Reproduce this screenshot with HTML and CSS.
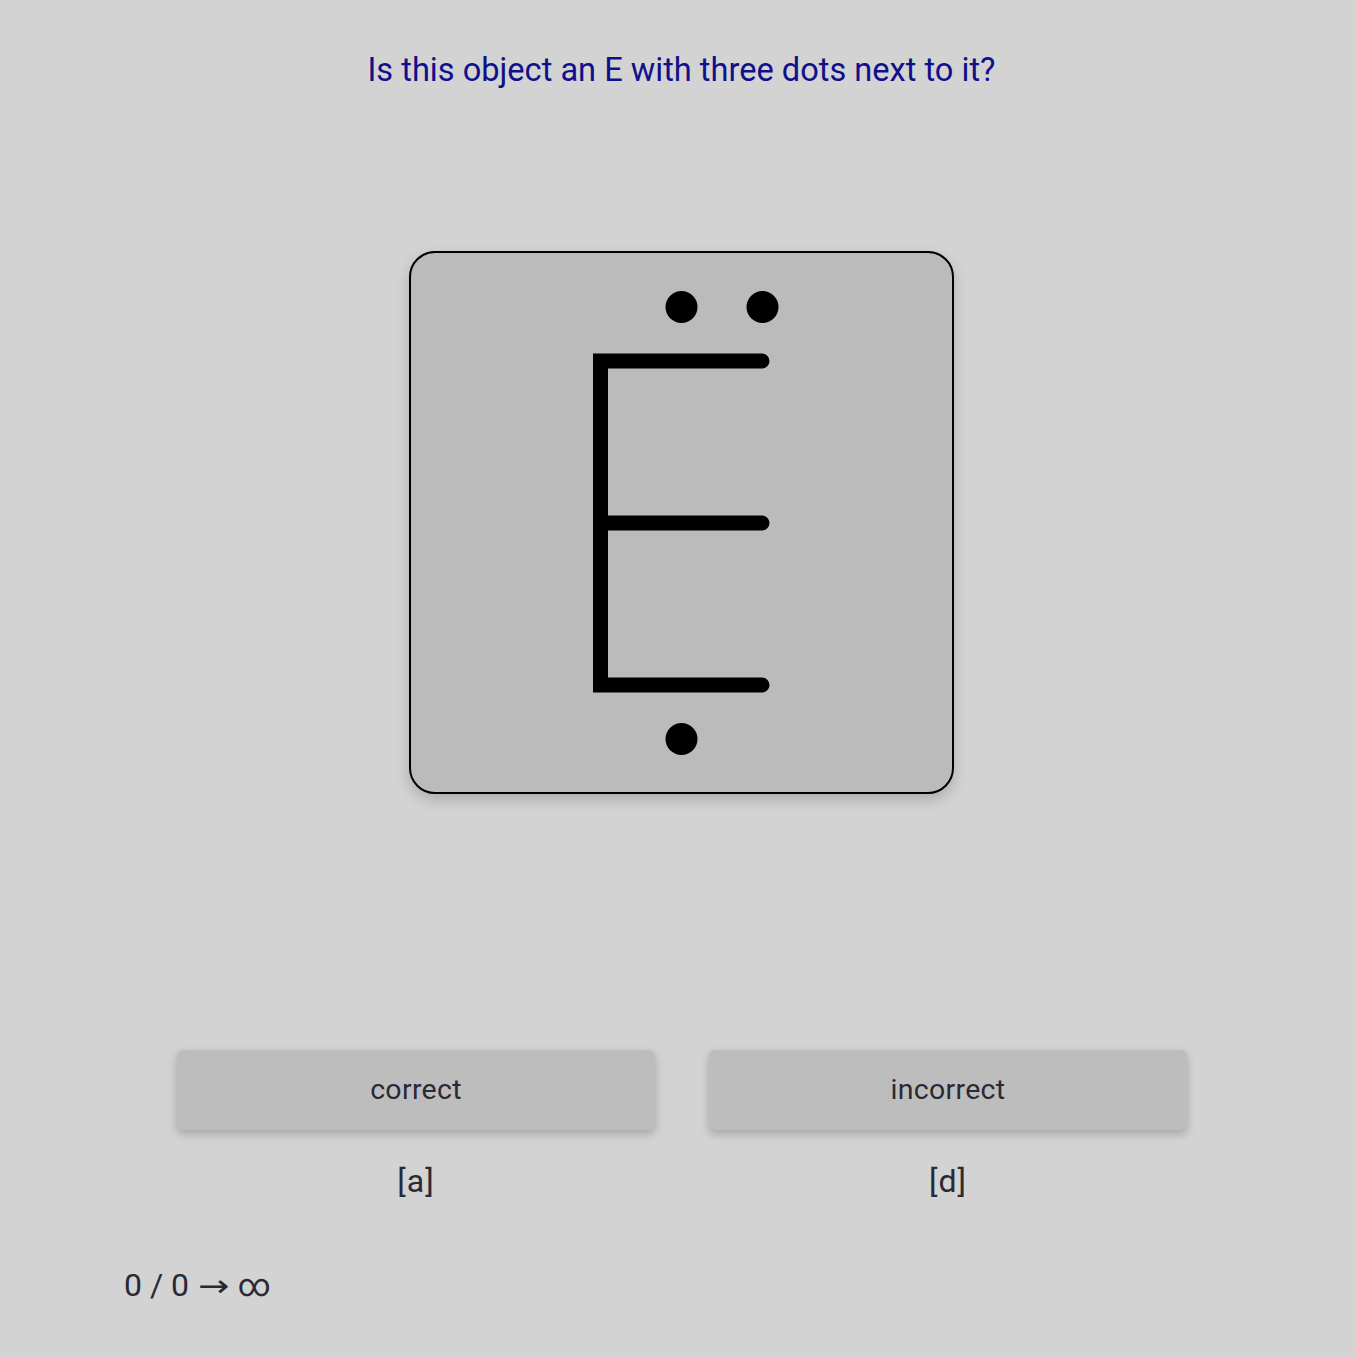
FILE: index.html
```html
<!DOCTYPE html>
<html>
<head>
<meta charset="utf-8">
<link rel="stylesheet" href="styles.css">
</head>
<body>
<div class="page">
  <h1 class="question">Is this object an E with three dots next to it?</h1>
  <div class="stage">
    <div class="card">
      <svg class="glyph" width="545" height="543" viewBox="0 0 545 543">
        <circle cx="272.5" cy="56" r="16" fill="#000"/>
        <circle cx="353.5" cy="56" r="16" fill="#000"/>
        <circle cx="272.5" cy="488" r="16" fill="#000"/>
        <path d="M353 110 H191.5 V434 H353 M191.5 272 H353" fill="none" stroke="#000" stroke-width="15" stroke-linecap="round" stroke-linejoin="miter"/>
      </svg>
    </div>
  </div>
  <div class="choices">
    <div class="choice">
      <button class="btn">correct</button>
      <div class="key">[a]</div>
    </div>
    <div class="choice">
      <button class="btn">incorrect</button>
      <div class="key">[d]</div>
    </div>
  </div>
  <div class="score">0 / 0 <span class="arrow">→</span> ∞</div>
</div>
</body>
</html>
```
FILE: styles.css
```css
html, body {
  margin: 0;
  padding: 0;
  background: #d3d3d3;
}
body {
  font-family: Roboto, "Liberation Sans", sans-serif;
  width: 1356px;
  height: 1358px;
}
.page {
  padding-left: 7px;
  box-sizing: border-box;
  width: 1356px;
  display: flex;
  flex-direction: column;
  align-items: center;
}
.question {
  margin: 50px 0 0 0;
  font-size: 32.6px;
  font-weight: 400;
  color: #10108a;
  line-height: 40px;
  height: 40px;
}
.stage {
  margin-top: 161px;
  display: flex;
  justify-content: center;
}
.card {
  width: 541px;
  height: 539px;
  border: 2px solid #000;
  border-radius: 26px;
  background: #bbbbbb;
  box-shadow: 0 6px 14px rgba(0,0,0,0.18);
  position: relative;
  overflow: hidden;
}
.glyph {
  display: block;
  margin: -2px;
}
.choices {
  margin-top: 256px;
  padding-left: 1px;
  display: flex;
  gap: 54px;
}
.choice {
  width: 478px;
  display: flex;
  flex-direction: column;
  align-items: center;
}
.btn {
  width: 478px;
  height: 80px;
  border: none;
  border-radius: 6px;
  background: #bdbdbd;
  box-shadow: 0 4px 10px rgba(0,0,0,0.22);
  font-family: Roboto, "Liberation Sans", sans-serif;
  font-size: 28.5px;
  letter-spacing: 0.3px;
  color: #2a2a35;
  padding: 0 0 0 0;
  line-height: 80px;
}
.key {
  margin-top: 33px;
  font-size: 32px;
  letter-spacing: 1px;
  color: #2a2a35;
  line-height: 36px;
}
.score {
  align-self: flex-start;
  margin-left: 117px;
  margin-top: 66px;
  font-size: 32px;
  color: #2a2a35;
  line-height: 40px;
}
.arrow {
  font-family: "DejaVu Sans", sans-serif;
  font-size: 30px;
  display: inline-block;
  transform: scaleX(1.25);
  margin: 0 4px;
}
```
